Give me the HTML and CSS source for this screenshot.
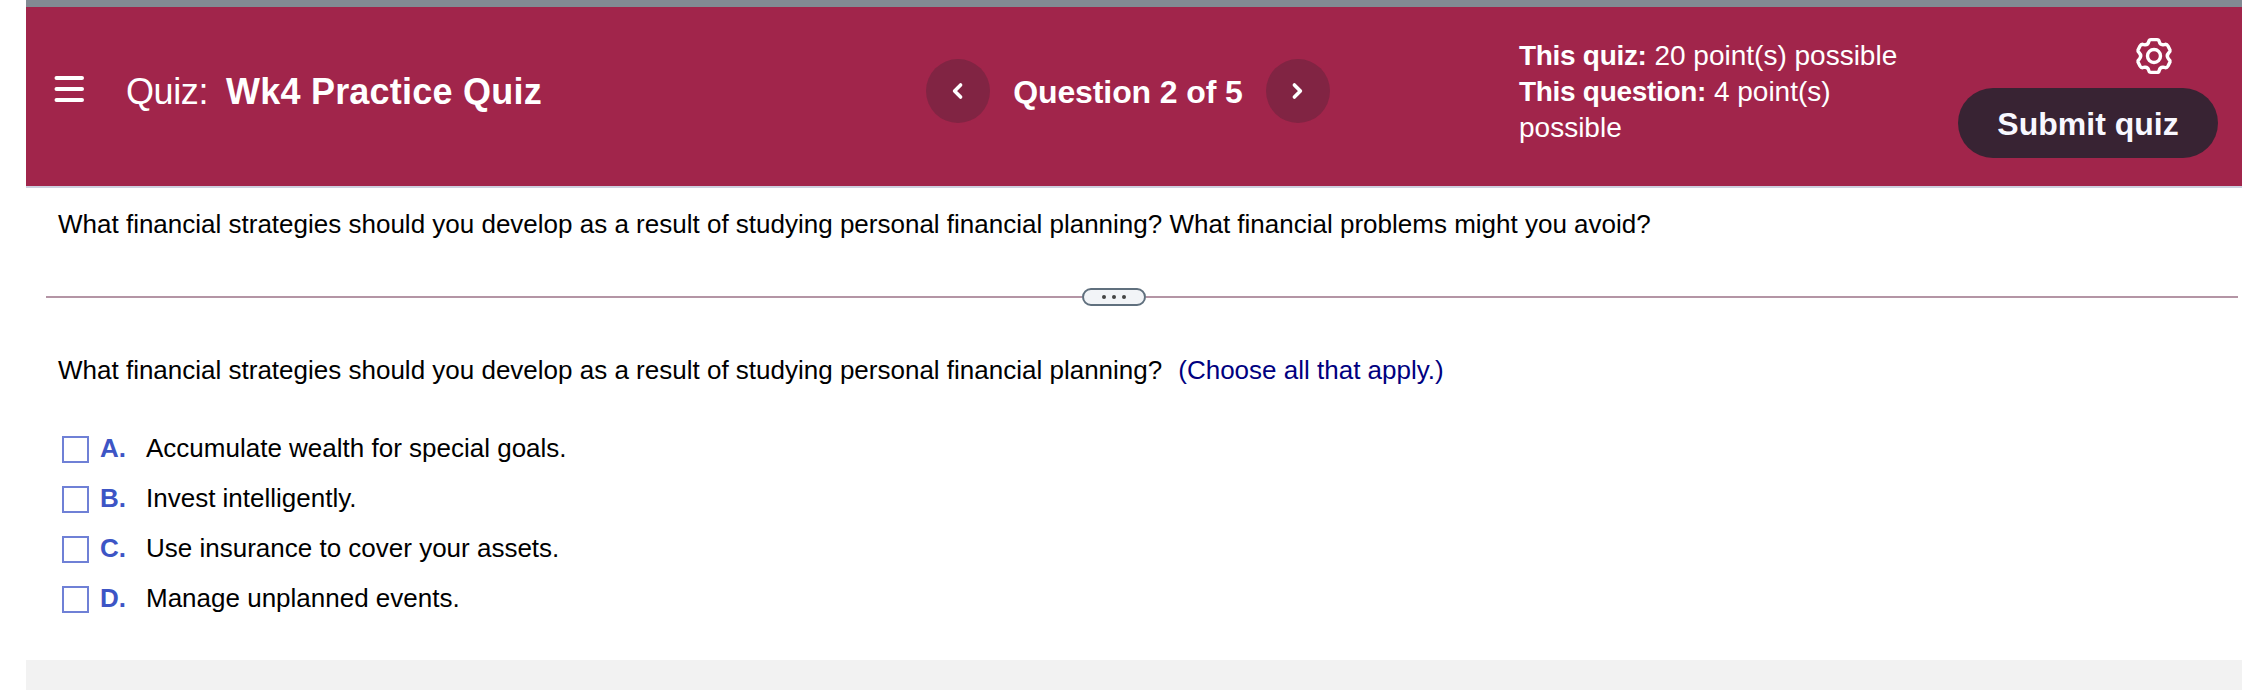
FILE: index.html
```html
<!DOCTYPE html>
<html lang="en">
<head>
<meta charset="utf-8">
<title>Wk4 Practice Quiz</title>
<link rel="stylesheet" href="styles.css">
</head>
<body>
<div class="app">
  <header class="header">
    <div class="title-group">
      <svg class="menu-icon" width="32" height="28" viewBox="0 0 32 28" fill="none" stroke="#fff" stroke-width="4" stroke-linecap="round"><path d="M3.500 3H29M3.500 14H29M3.500 25H29"/></svg>
      <h1 class="title"><span class="title-label">Quiz:</span><span class="title-name">Wk4 Practice Quiz</span></h1>
    </div>
    <nav class="pager">
      <button class="round"><svg width="20" height="24" viewBox="0 0 20 24" fill="none" stroke="#fff" stroke-width="3.6" stroke-linecap="round" stroke-linejoin="round"><path d="M12.6 6L6.6 12L12.6 18"/></svg></button>
      <span class="pager-label">Question 2 of 5</span>
      <button class="round"><svg width="20" height="24" viewBox="0 0 20 24" fill="none" stroke="#fff" stroke-width="3.6" stroke-linecap="round" stroke-linejoin="round"><path d="M6.4 6L12.4 12L6.4 18"/></svg></button>
    </nav>
    <div class="points">
      <div><b>This quiz:</b> 20 point(s) possible</div>
      <div><b>This question:</b> 4 point(s) possible</div>
    </div>
    <div class="actions">
      <svg class="gear" width="40" height="40" viewBox="0 0 40 40" fill="none" stroke="#fff" stroke-width="3.4" stroke-linejoin="round"><path d="M17 3.6H23Q24.8 3.6 25.2 5.5Q26 9 29 8.8L31.5 8.3Q33 8.2 34 10L36 14Q36.4 15.5 35 16.5Q31.6 20 35 23.5Q36.4 24.5 36 26L34 30Q33 31.8 31.5 31.7L29 31.2Q26 31 25.2 34.5Q24.8 36.4 23 36.4H17Q15.2 36.4 14.8 34.5Q14 31 11 31.2L8.5 31.7Q7 31.8 6 30L4 26Q3.6 24.5 5 23.5Q8.4 20 5 16.5Q3.6 15.5 4 14L6 10Q7 8.2 8.5 8.3L11 8.8Q14 9 14.8 5.5Q15.2 3.6 17 3.6Z"/><circle cx="20" cy="20" r="6.5"/></svg>
      <button class="submit">Submit quiz</button>
    </div>
  </header>
  <main class="content">
    <p class="stem">What financial strategies should you develop as a result of studying personal financial planning? What financial problems might you avoid?</p>
    <div class="divider"><span class="handle"><i></i><i></i><i></i></span></div>
    <p class="prompt">What financial strategies should you develop as a result of studying personal financial planning?<span class="hint">(Choose all that apply.)</span></p>
    <ul class="options">
      <li><span class="box"></span><b>A.</b><span>Accumulate wealth for special goals.</span></li>
      <li><span class="box"></span><b>B.</b><span>Invest intelligently.</span></li>
      <li><span class="box"></span><b>C.</b><span>Use insurance to cover your assets.</span></li>
      <li><span class="box"></span><b>D.</b><span>Manage unplanned events.</span></li>
    </ul>
  </main>
  <footer class="footer"></footer>
</div>
</body>
</html>
```
FILE: styles.css
```css
* { box-sizing: border-box; }
body {
  margin: 0;
  background: #fff;
  color: #000;
  font-family: "Liberation Sans", Arial, sans-serif;
  font-size: 26px;
  overflow: hidden;
}
button { font-family: inherit; border: 0; padding: 0; }
.app { display: flex; flex-direction: column; height: 690px; margin-left: 26px; }
.header {
  display: grid;
  grid-template-columns: 900px 593px 413px 1fr;
  height: 188px;
  border-top: 7px solid #828a93;
  border-bottom: 2px solid #cdd0df;
  background: #a1254b;
  color: #fff;
  white-space: nowrap;
}
.title-group { display: flex; align-items: flex-start; padding: 68px 0 0 27px; }
.title { display: flex; margin: -4px 0 0 41px; font-size: 36px; line-height: 42px; font-weight: 400; }
.title-label { width: 100px; letter-spacing: -0.4px; }
.title-name { font-weight: 700; letter-spacing: 0.22px; }
.pager { display: flex; height: 64px; margin-top: 52px; align-items: center; }
.round {
  display: flex;
  align-items: center;
  justify-content: center;
  width: 64px;
  height: 64px;
  border-radius: 50%;
  background: #812443;
}
.pager-label { width: 276px; padding-top: 2px; text-align: center; font-size: 32px; line-height: 36px; font-weight: 700; letter-spacing: -0.1px; }
.points { width: 385px; padding-top: 31px; font-size: 28px; line-height: 36px; white-space: normal; }
.points b { letter-spacing: -0.3px; }
.actions { display: flex; flex-direction: column; padding: 29px 0 0 26px; }
.gear { margin-left: 176px; }
.submit {
  width: 260px;
  height: 70px;
  margin-top: 12px;
  padding-top: 2px;
  border-radius: 35px;
  background: #382333;
  color: #f8f8ff;
  font-size: 32px;
  font-weight: 700;
}
.content { flex: 1; white-space: nowrap; }
.stem, .prompt { margin: 0; padding-left: 32px; line-height: 30px; }
.stem { padding-top: 21px; }
.divider {
  display: flex;
  align-items: center;
  justify-content: center;
  height: 18px;
  margin: 49px 4px 0 20px;
}
.divider::before, .divider::after { content: ""; height: 2px; background: #b495a5; }
.divider::before { width: 1036px; }
.divider::after { flex: 1; }
.handle {
  display: flex;
  align-items: center;
  justify-content: center;
  gap: 6px;
  width: 64px;
  height: 18px;
  border: 2px solid #60707e;
  border-radius: 9px;
  background: #f2f4f7;
}
.handle i { width: 4px; height: 4px; border-radius: 50%; background: #444; }
.prompt { padding-top: 49px; }
.hint { margin-left: 16px; color: #000080; }
.options { margin: 38px 0 0 36px; padding: 0; list-style: none; }
.options li { display: grid; grid-template-columns: 38px 46px auto; height: 50px; line-height: 50px; }
.options b { color: #3d55c5; }
.box { width: 27px; height: 27px; margin-top: 13px; border: 2px solid #6f80d6; }
.footer { height: 30px; background: #f2f2f2; }
```
